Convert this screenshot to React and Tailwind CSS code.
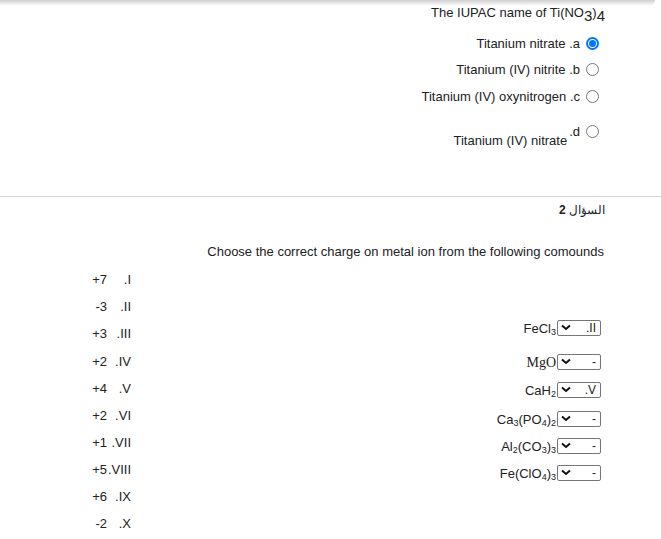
import React from 'react';

const options = [
  { label: 'Titanium nitrate', key: '.a', checked: true },
  { label: 'Titanium (IV) nitrite', key: '.b' },
  { label: 'Titanium (IV) oxynitrogen', key: '.c' },
];

const charges = [
  ['+7', '.I'],
  ['-3', '.II'],
  ['+3', '.III'],
  ['+2', '.IV'],
  ['+4', '.V'],
  ['+2', '.VI'],
  ['+1', '.VII'],
  ['+5', '.VIII'],
  ['+6', '.IX'],
  ['-2', '.X'],
];

function Radio({ checked }) {
  if (checked) {
    return (
      <span className="inline-flex w-[13px] h-[13px] rounded-full border-2 border-[#0075ff] items-center justify-center bg-white">
        <span className="w-[7px] h-[7px] rounded-full bg-[#0075ff]" />
      </span>
    );
  }
  return <span className="inline-block w-[13px] h-[13px] rounded-full border border-[#767676] bg-white" />;
}

function Select({ value }) {
  return (
    <span className="flex items-center justify-between w-[44px] h-[16px] border border-[#767676] rounded-[2px] bg-white pl-[3px] pr-[4px]">
      <svg width="10" height="7" viewBox="0 0 10 7">
        <path d="M1 1.5 L5 5 L9 1.5" fill="none" stroke="#111" strokeWidth="2" />
      </svg>
      <span className="text-[12px] leading-none text-[#222]">{value}</span>
    </span>
  );
}

const sub = "text-[9px] align-baseline relative top-[2px]";

const compounds = [
  { node: <>FeCl<sub className={sub}>3</sub></>, value: '.II', h: 'h-[34px]' },
  { node: <span className="font-['Liberation_Serif',serif] text-[14px]">MgO</span>, value: '-', h: 'h-[28px]' },
  { node: <>CaH<sub className={sub}>2</sub></>, value: '.V', h: 'h-[29px]' },
  { node: <>Ca<sub className={sub}>3</sub>(PO<sub className={sub}>4</sub>)<sub className={sub}>2</sub></>, value: '-', h: 'h-[27px]' },
  { node: <>Al<sub className={sub}>2</sub>(CO<sub className={sub}>3</sub>)<sub className={sub}>3</sub></>, value: '-', h: 'h-[27px]' },
  { node: <>Fe(ClO<sub className={sub}>4</sub>)<sub className={sub}>3</sub></>, value: '-', h: 'h-[27px]' },
];

export default function App() {
  return (
    <div className="w-[661px] h-[539px] bg-white overflow-hidden font-['Liberation_Sans',Arial,sans-serif] text-[13px] text-[#222]">
      <div className="h-[6px] w-[655px] rounded-br-[6px] bg-gradient-to-b from-[#cfcfcf] to-white" />

      {/* question 1 */}
      <div className="flex flex-col items-end pr-[56px]">
        <div className="h-[16px] flex items-center -mt-[1px]">
          The IUPAC name of Ti(NO<span className="text-[15px] relative top-[3px]">3</span>)<span className="text-[15px] relative top-[3px]">4</span>
        </div>
        <div className="flex flex-col items-end mt-[9px] pr-[6px]">
          {options.map((o) => (
            <div key={o.key} className="h-[26.5px] flex items-center gap-[6px]">
              <span>{o.label} {o.key}</span>
              <Radio checked={o.checked} />
            </div>
          ))}
          <div className="flex items-start gap-[6px] mt-[12px]">
            <span className="mt-[9px]">Titanium (IV) nitrate</span>
            <span className="-ml-[4px]">.d</span>
            <span className="mt-[2px]"><Radio /></span>
          </div>
        </div>
      </div>

      <div className="mt-[46px] border-t border-[#d6d6d6]" />

      {/* question 2 */}
      <div className="flex justify-end pr-[56px] mt-[4px]">
        <span dir="rtl" className="text-[12px]">السؤال <b>2</b></span>
      </div>
      <div className="flex justify-end pr-[57px] mt-[23px]">
        <span>Choose the correct charge on metal ion from the following comounds</span>
      </div>

      <div className="flex justify-between mt-[5px]">
        <div className="flex flex-col pl-[86px]">
          {charges.map(([n, r], i) => (
            <div key={i} className="h-[27.1px] flex items-center">
              <span className="w-[21px] text-right">{n}</span>
              <span className="w-[24px] text-right">{r}</span>
            </div>
          ))}
        </div>
        <div className="flex flex-col items-end pr-[60px] pt-[53px]">
          {compounds.map((c, i) => (
            <div key={i} className={`${c.h} flex items-start gap-[1px]`}>
              <span className="leading-[16px] mt-[1px]">{c.node}</span>
              <Select value={c.value} />
            </div>
          ))}
        </div>
      </div>
      <div className="mt-[4px] border-t border-[#eeeeee]" />
    </div>
  );
}
